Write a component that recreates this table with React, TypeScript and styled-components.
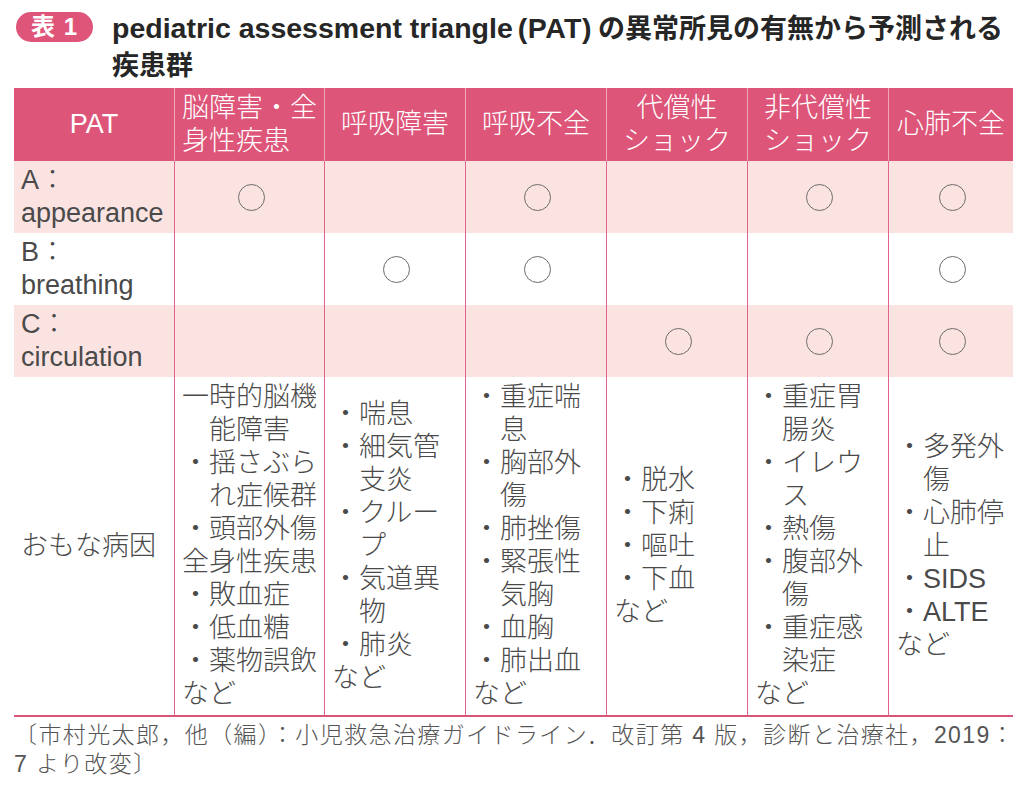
import styled, { createGlobalStyle } from "styled-components";

const GlobalStyle = createGlobalStyle`
  body {
    margin: 0;
    background: #ffffff;
    font-family: "Liberation Sans", "Noto Sans CJK JP", sans-serif;
  }
`;

const headers: { lines: string[]; left?: boolean }[] = [
  { lines: ["PAT"] },
  { lines: ["脳障害・全", "身性疾患"], left: true },
  { lines: ["呼吸障害"] },
  { lines: ["呼吸不全"] },
  { lines: ["代償性", "ショック"] },
  { lines: ["非代償性", "ショック"] },
  { lines: ["心肺不全"] },
];

const findings = [
  { label: ["A：", "appearance"], marks: [1, 0, 1, 0, 1, 1], tint: true },
  { label: ["B：", "breathing"], marks: [0, 1, 1, 0, 0, 1], tint: false },
  { label: ["C：", "circulation"], marks: [0, 0, 0, 1, 1, 1], tint: true },
];

const causes: string[][] = [
  ["一時的脳機能障害", "・揺さぶられ症候群", "・頭部外傷", "全身性疾患", "・敗血症", "・低血糖", "・薬物誤飲", "など"],
  ["・喘息", "・細気管支炎", "・クループ", "・気道異物", "・肺炎", "など"],
  ["・重症喘息", "・胸部外傷", "・肺挫傷", "・緊張性気胸", "・血胸", "・肺出血", "など"],
  ["・脱水", "・下痢", "・嘔吐", "・下血", "など"],
  ["・重症胃腸炎", "・イレウス", "・熱傷", "・腹部外傷", "・重症感染症", "など"],
  ["・多発外傷", "・心肺停止", "・SIDS", "・ALTE", "など"],
];

export default function App() {
  return (
    <Page>
      <GlobalStyle />
      <TitleRow>
        <Badge>表 1</Badge>
        <Title>
          <Latin>pediatric assessment triangle</Latin>
          <Paren>(PAT)</Paren>の異常所見の有無から予測される
          <br />
          疾患群
        </Title>
      </TitleRow>

      <Table>
        {headers.map((h, i) => (
          <HeadCell key={i} $last={i === headers.length - 1}>
            <HeadText $left={h.left}>
              {h.lines.map((l) => (
                <div key={l}>{l}</div>
              ))}
            </HeadText>
          </HeadCell>
        ))}

        {findings.map((row) => (
          <Row key={row.label[1]}>
            <Cell $tint={row.tint}>
              <Label>
                {row.label[0]}
                <br />
                {row.label[1]}
              </Label>
            </Cell>
            {row.marks.map((m, j) => (
              <Cell key={j} $tint={row.tint} $center $last={j === row.marks.length - 1}>
                {m ? <Mark /> : null}
              </Cell>
            ))}
          </Row>
        ))}

        <Row>
          <Cell $bottom>
            <Label>おもな病因</Label>
          </Cell>
          {causes.map((list, j) => (
            <Cell key={j} $bottom $last={j === causes.length - 1}>
              <List>
                {list.map((item) => (
                  <Item key={item}>{item}</Item>
                ))}
              </List>
            </Cell>
          ))}
        </Row>
      </Table>

      <Source>
        〔市村光太郎，他（編）：小児救急治療ガイドライン．改訂第 4 版，診断と治療社，2019：
        <br />7 より改変〕
      </Source>
    </Page>
  );
}

const Page = styled.div`
  width: 1024px;
  height: 798px;
  box-sizing: border-box;
  padding: 10px 0 0 14px;
  color: #444444;
`;

const TitleRow = styled.div`
  display: flex;
  align-items: flex-start;
  gap: 19px;
  padding-left: 2px;
`;

const Badge = styled.div`
  flex: none;
  width: 77px;
  height: 30px;
  margin-top: 2px;
  border-radius: 15px;
  background: #df5579;
  color: #ffffff;
  font-size: 24px;
  font-weight: 700;
  line-height: 30px;
  text-align: center;
  letter-spacing: 1px;
`;

const Title = styled.div`
  font-size: 27px;
  line-height: 37px;
  font-weight: 700;
  color: #262626;
  white-space: nowrap;
`;

const Latin = styled.span`
  font-size: 28.5px;
`;

const Paren = styled.span`
  font-size: 28.5px;
  margin: 0 6px 0 5px;
  letter-spacing: 0.5px;
`;

const Table = styled.div`
  display: grid;
  grid-template-columns: 161px 150px 141px 141px 141px 141px 124px;
  grid-template-rows: 73px 72px 72px 72px 340px;
  width: 999px;
  margin-top: 3px;
  font-size: 27px;
  line-height: 33px;
  font-weight: 300;
  color: #4a4a4a;
`;

const Row = styled.div`
  display: contents;
`;

const HeadCell = styled.div<{ $last?: boolean }>`
  display: flex;
  align-items: center;
  justify-content: center;
  background: #dd5579;
  color: #ffffff;
  border-right: ${(p) => (p.$last ? "none" : "1.5px solid #f2a6ba")};
`;

const HeadText = styled.div<{ $left?: boolean }>`
  width: 100%;
  box-sizing: border-box;
  padding: 0 ${(p) => (p.$left ? "4px 0 7px" : "0")};
  text-align: ${(p) => (p.$left ? "left" : "center")};
  white-space: nowrap;
`;

const Cell = styled.div<{ $tint?: boolean; $center?: boolean; $last?: boolean; $bottom?: boolean }>`
  display: flex;
  align-items: center;
  justify-content: ${(p) => (p.$center ? "center" : "flex-start")};
  box-sizing: border-box;
  padding: 0 4px 0 7px;
  background: ${(p) => (p.$tint ? "#fbe3e1" : "#ffffff")};
  border-right: ${(p) => (p.$last ? "none" : "1.5px solid #e1648e")};
  border-bottom: ${(p) => (p.$bottom ? "2px solid #d9557c" : "none")};
  min-width: 0;
`;

const Label = styled.div`
  white-space: nowrap;
`;

const Mark = styled.div`
  width: 25px;
  height: 25px;
  border-radius: 50%;
  border: 1.5px solid #6b6b6b;
`;

const List = styled.div`
  width: 100%;
`;

const Item = styled.div`
  padding-left: 1em;
  text-indent: -1em;
  line-break: strict;
`;

const Source = styled.div`
  margin-top: 4px;
  font-size: 23px;
  line-height: 29px;
  font-weight: 300;
  letter-spacing: 1.4px;
  color: #555555;
  white-space: nowrap;
`;
